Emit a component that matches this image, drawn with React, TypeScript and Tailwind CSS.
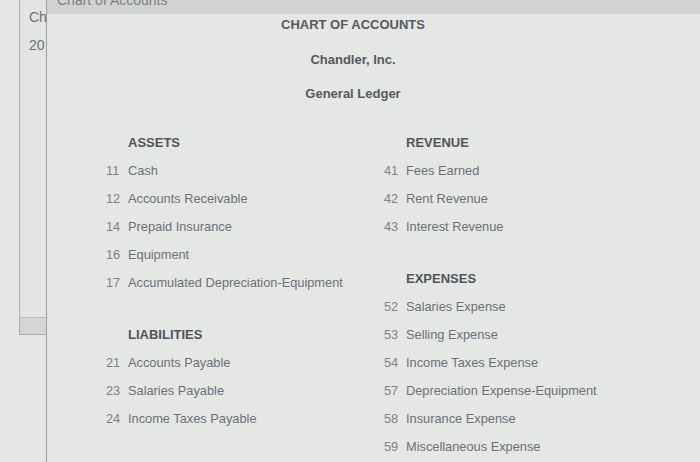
const assets = [
  ['11', 'Cash'],
  ['12', 'Accounts Receivable'],
  ['14', 'Prepaid Insurance'],
  ['16', 'Equipment'],
  ['17', 'Accumulated Depreciation-Equipment'],
]

const liabilities = [
  ['21', 'Accounts Payable'],
  ['23', 'Salaries Payable'],
  ['24', 'Income Taxes Payable'],
]

const revenue = [
  ['41', 'Fees Earned'],
  ['42', 'Rent Revenue'],
  ['43', 'Interest Revenue'],
]

const expenses = [
  ['52', 'Salaries Expense'],
  ['53', 'Selling Expense'],
  ['54', 'Income Taxes Expense'],
  ['57', 'Depreciation Expense-Equipment'],
  ['58', 'Insurance Expense'],
  ['59', 'Miscellaneous Expense'],
]

function Heading({ children }: { children: string }) {
  return (
    <div className="h-[28px] flex items-center pl-[22px] font-bold text-[#50545c]">
      {children}
    </div>
  )
}

function Row({ num, label }: { num: string; label: string }) {
  return (
    <div className="h-[28px] flex items-center whitespace-nowrap text-[12.8px]">
      <span className="w-[22px] text-[#7e8185]">{num}</span>
      <span className="text-[#6b6f79]">{label}</span>
    </div>
  )
}

function Section({ title, rows }: { title: string; rows: string[][] }) {
  return (
    <div>
      <Heading>{title}</Heading>
      {rows.map(([n, l]) => (
        <Row key={n} num={n} label={l} />
      ))}
    </div>
  )
}

export default function App() {
  return (
    <div
      className="w-[700px] h-[462px] overflow-hidden flex bg-[#e5e7e4] text-[13px]"
      style={{ fontFamily: '"Liberation Sans", Arial, sans-serif' }}
    >
      {/* side strip */}
      <div className="w-[47px] shrink-0 border-r border-[#9a9d9f] pl-[19px]">
        <div className="h-[335px] flex flex-col border-l border-b border-[#a9acae] bg-[#e3e5e2]">
          <div className="pl-[9px] pt-[8px] leading-[18px] text-[14px] text-[#6e7175]">Ch</div>
          <div className="pl-[9px] pt-[10px] leading-[18px] text-[14px] text-[#6e7175]">20</div>
          <div className="mt-auto h-[17px] border-t border-[#b9bcbd] bg-[#d4d6d4]" />
        </div>
      </div>

      {/* main */}
      <div className="flex-1 flex flex-col">
        <div className="h-[14px] bg-[#d1d3d2] overflow-hidden pl-[10px]">
          <div className="-mt-[8px] text-[14px] leading-[16px] text-[#7c7f83]">Chart of Accounts</div>
        </div>

        <div className="mt-[1px] w-[612px] text-center font-bold text-[#555962] leading-[20px]">
          <div>CHART OF ACCOUNTS</div>
          <div className="mt-[15px]">Chandler, Inc.</div>
          <div className="mt-[14px]">General Ledger</div>
        </div>

        <div className="mt-[25px] pl-[59px] flex">
          <div className="w-[278px] flex flex-col gap-[24px]">
            <Section title="ASSETS" rows={assets} />
            <Section title="LIABILITIES" rows={liabilities} />
          </div>
          <div className="flex flex-col gap-[24px]">
            <Section title="REVENUE" rows={revenue} />
            <Section title="EXPENSES" rows={expenses} />
          </div>
        </div>
      </div>
    </div>
  )
}
